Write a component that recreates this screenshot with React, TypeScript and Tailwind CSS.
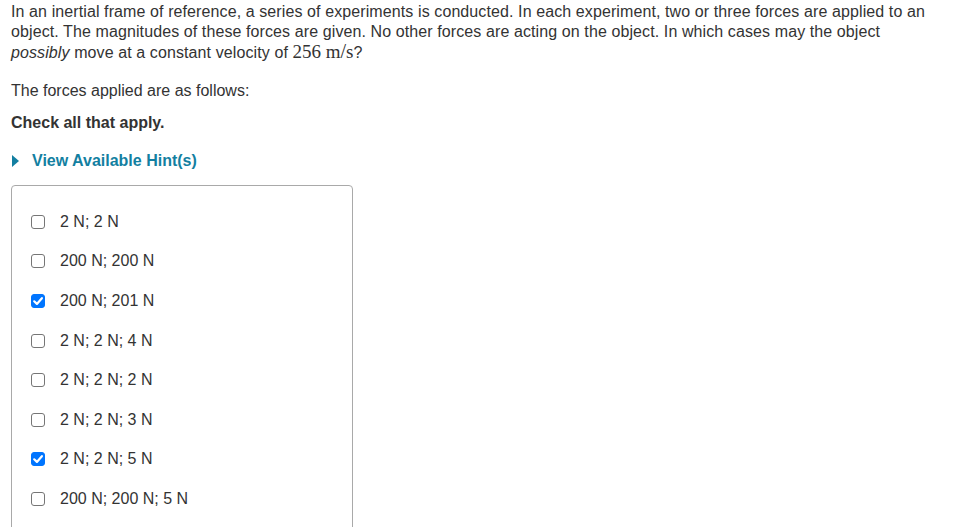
import React from "react";

const options: { label: string; checked: boolean }[] = [
  { label: "2 N; 2 N", checked: false },
  { label: "200 N; 200 N", checked: false },
  { label: "200 N; 201 N", checked: true },
  { label: "2 N; 2 N; 4 N", checked: false },
  { label: "2 N; 2 N; 2 N", checked: false },
  { label: "2 N; 2 N; 3 N", checked: false },
  { label: "2 N; 2 N; 5 N", checked: true },
  { label: "200 N; 200 N; 5 N", checked: false },
];

export default function App() {
  return (
    <div
      className="w-[953px] h-[527px] overflow-hidden bg-white text-[#333333] px-[11px] pt-[2px]"
      style={{ fontFamily: '"Liberation Sans", Arial, sans-serif' }}
    >
      <p className="text-[16px] leading-[20px] m-0 whitespace-nowrap tracking-[0.1px]">
        In an inertial frame of reference, a series of experiments is conducted. In each experiment, two or three forces are applied to an
        <br />
        object. The magnitudes of these forces are given. No other forces are acting on the object. In which cases may the object
        <br />
        <i>possibly</i> move at a constant velocity of{" "}
        <span className="text-[19px] leading-[18px] tracking-normal" style={{ fontFamily: '"Liberation Serif", "Times New Roman", serif' }}>
          256 m<span className="text-[20px]">/</span>s
        </span>
        ?
      </p>
      <p className="text-[16px] leading-[20px] mt-[18px]">The forces applied are as follows:</p>
      <p className="text-[16px] leading-[20px] mt-[12px] font-bold">Check all that apply.</p>
      <div className="mt-[18px] flex items-center gap-[12px] text-[16px] leading-[20px] font-bold text-[#137fa1]">
        <svg width="8" height="12" viewBox="0 0 8 12" className="ml-[1px]">
          <polygon points="0,0 7,6 0,12" fill="#137fa1" />
        </svg>
        <span>View Available Hint(s)</span>
      </div>
      <div className="mt-[14px] w-[342px] border border-[#a9a9a9] rounded-[4px] pt-[16px] pl-[19px] h-[400px]">
        {options.map((o, i) => (
          <label key={i} className="flex items-center h-[39.6px] text-[16px] text-[#333333]">
            <span className="relative w-[14px] h-[14px] shrink-0">
              <input
                type="checkbox"
                defaultChecked={o.checked}
                className="peer appearance-none absolute inset-0 m-0 w-[14px] h-[14px] rounded-[3px] border-[1.5px] border-[#767676] bg-white checked:bg-[#0075ff] checked:border-[#0075ff]"
              />
              <svg
                viewBox="0 0 14 14"
                className="absolute inset-0 w-[14px] h-[14px] pointer-events-none hidden peer-checked:block"
              >
                <path d="M3.2 7.3 L5.9 9.9 L10.9 4.2" fill="none" stroke="white" strokeWidth="2.2" strokeLinecap="round" strokeLinejoin="round" />
              </svg>
            </span>
            <span className="ml-[15px]">{o.label}</span>
          </label>
        ))}
      </div>
    </div>
  );
}
